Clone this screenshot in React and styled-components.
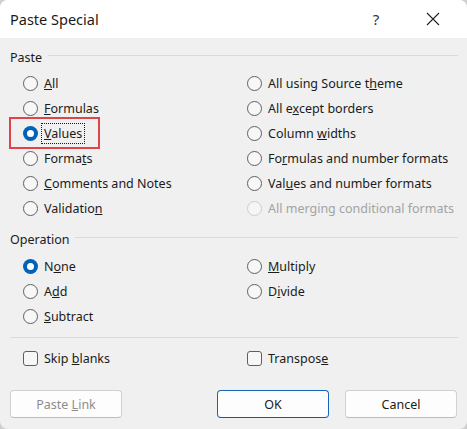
import React from 'react';
import styled, { createGlobalStyle } from 'styled-components';

const GlobalStyle = createGlobalStyle`
  html, body {
    margin: 0;
    padding: 0;
    background: #cfcfcf;
  }
  * { box-sizing: border-box; }
`;

const Dialog = styled.div`
  width: 467px;
  height: 429px;
  background: #f0f0f0;
  border-radius: 8px;
  overflow: hidden;
  display: flex;
  flex-direction: column;
  font-family: "Noto Sans", "Open Sans", sans-serif;
  font-size: 12.5px;
  color: #1b1b1b;
`;

const TitleBar = styled.div`
  height: 38px;
  background: #ffffff;
  display: flex;
  align-items: center;
  padding-left: 10px;
`;

const Title = styled.div`
  flex: 1;
  font-size: 14.5px;
  color: #1a1a1a;
`;

const TitleButton = styled.div`
  width: ${p => p.w}px;
  display: flex;
  justify-content: center;
  align-items: center;
  font-size: 15px;
  color: #333;
`;

const Body = styled.div`
  flex: 1;
  display: flex;
  flex-direction: column;
  padding: 0 9px 0 10px;
`;

const GroupHeader = styled.div`
  display: flex;
  align-items: center;
  height: 20px;
  margin-top: ${p => p.top}px;
  gap: 6px;

  &::after {
    content: '';
    flex: 1;
    border-top: 1px solid #dadada;
    margin-top: -3px;
  }
`;

const Options = styled.div`
  display: grid;
  grid-template-columns: 224px 1fr;
  grid-auto-flow: column;
  grid-template-rows: repeat(${p => p.rows}, 25px);
  padding-left: 13px;
  margin-top: ${p => p.top}px;
`;

const Option = styled.label`
  display: flex;
  align-items: center;
  gap: 6px;
  height: 25px;
  position: relative;
  color: ${p => (p.disabled ? '#a3a3a3' : '#1b1b1b')};
  white-space: nowrap;
`;

const Radio = styled.span`
  width: 15px;
  height: 15px;
  border-radius: 50%;
  flex: none;
  border: 1px solid ${p => (p.disabled ? '#cdcdcd' : '#5f5f5f')};
  background: ${p => (p.disabled ? '#f5f5f5' : '#f7f7f7')};
  ${p => p.checked && `
    border: none;
    background: #0062b8;
    display: flex;
    align-items: center;
    justify-content: center;
    &::after {
      content: '';
      width: 7px;
      height: 7px;
      border-radius: 50%;
      background: #ffffff;
    }
  `}
`;

const Check = styled.span`
  width: 15px;
  height: 15px;
  border-radius: 3px;
  flex: none;
  border: 1px solid #5f5f5f;
  background: #f7f7f7;
`;

const Text = styled.span`
  padding: 1px 2px;
  margin-left: -2px;
  ${p => p.focused && `outline: 1px dotted #1b1b1b; outline-offset: 0;`}
`;

const Highlight = styled.span`
  position: absolute;
  left: -14px;
  top: -4px;
  width: 91px;
  height: 32px;
  border: 2px solid #e0444b;
  pointer-events: none;
`;

const Separator = styled.div`
  border-top: 1px solid #dadada;
  margin-top: 8px;
`;

const CheckRow = styled(Options)`
  grid-template-rows: 25px;
`;

const Footer = styled.div`
  display: flex;
  align-items: center;
  margin-top: 19px;
  padding-right: 1px;
`;

const Button = styled.div`
  width: 112px;
  height: 28px;
  border-radius: 4px;
  display: flex;
  align-items: center;
  justify-content: center;
  background: #fdfdfd;
  border: 1px solid ${p => (p.primary ? '#1565b4' : '#d1d1d1')};
  border-bottom-color: ${p => (p.primary ? '#0d5aa7' : '#bcbcbc')};
  color: ${p => (p.disabled ? '#8d8d8d' : '#1b1b1b')};
  margin-left: ${p => p.gap || 0}px;
`;

const Spacer = styled.div`
  flex: 1;
`;

const Key = ({ text, k }) => (
  <span>
    {text.slice(0, k)}
    <u>{text[k]}</u>
    {text.slice(k + 1)}
  </span>
);

const pasteOptions = [
  { text: 'All', k: 0 },
  { text: 'Formulas', k: 0 },
  { text: 'Values', k: 0, checked: true, focused: true, highlight: true },
  { text: 'Formats', k: 5 },
  { text: 'Comments and Notes', k: 0 },
  { text: 'Validation', k: 9 },
  { text: 'All using Source theme', k: 18 },
  { text: 'All except borders', k: 5 },
  { text: 'Column widths', k: 7 },
  { text: 'Formulas and number formats', k: 2 },
  { text: 'Values and number formats', k: 3 },
  { text: 'All merging conditional formats', k: -1, disabled: true },
];

const opOptions = [
  { text: 'None', k: 1, checked: true },
  { text: 'Add', k: 1 },
  { text: 'Subtract', k: 0 },
  { text: 'Multiply', k: 0 },
  { text: 'Divide', k: 1 },
];

const RadioOption = ({ o }) => (
  <Option disabled={o.disabled}>
    {o.highlight && <Highlight />}
    <Radio checked={o.checked} disabled={o.disabled} />
    <Text focused={o.focused}>
      {o.k >= 0 ? <Key text={o.text} k={o.k} /> : o.text}
    </Text>
  </Option>
);

const App = () => (
  <>
    <GlobalStyle />
    <Dialog>
      <TitleBar>
        <Title>Paste Special</Title>
        <TitleButton w={46}>?</TitleButton>
        <TitleButton w={68}>
          <svg width="14" height="14" viewBox="0 0 14 14">
            <path d="M1 1 L13 13 M13 1 L1 13" stroke="#222" strokeWidth="1.1" fill="none" />
          </svg>
        </TitleButton>
      </TitleBar>
      <Body>
        <GroupHeader top={9}>Paste</GroupHeader>
        <Options rows={6} top={4}>
          {pasteOptions.map(o => <RadioOption key={o.text} o={o} />)}
        </Options>
        <GroupHeader top={8}>Operation</GroupHeader>
        <Options rows={3} top={5}>
          {opOptions.map(o => <RadioOption key={o.text} o={o} />)}
        </Options>
        <Separator />
        <CheckRow top={8}>
          <Option>
            <Check />
            <Text><Key text="Skip blanks" k={5} /></Text>
          </Option>
          <Option>
            <Check />
            <Text><Key text="Transpose" k={8} /></Text>
          </Option>
        </CheckRow>
        <Footer>
          <Button disabled><Key text="Paste Link" k={6} /></Button>
          <Spacer />
          <Button primary>OK</Button>
          <Button gap={16}>Cancel</Button>
        </Footer>
      </Body>
    </Dialog>
  </>
);

export default App;
